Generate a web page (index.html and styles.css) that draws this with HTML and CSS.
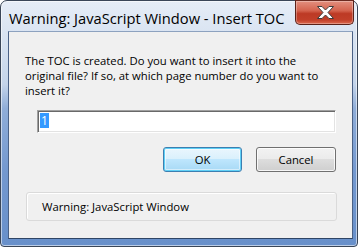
FILE: index.html
```html
<!DOCTYPE html>
<html>
<head>
<meta charset="utf-8">
<link rel="stylesheet" href="styles.css">
</head>
<body>
<div class="window">
  <div class="titlebar">
    <div class="title">Warning: JavaScript Window - Insert TOC</div>
    <div class="close">
      <svg width="17" height="13" viewBox="0 0 17 13"><polygon points="0.5,0.5 5,0.5 8.5,4 12,0.5 16.5,0.5 11,6.5 16.5,12.5 12,12.5 8.5,9 5,12.5 0.5,12.5 6,6.5" fill="#fff" stroke="#3d3d3d" stroke-width="1" stroke-linejoin="round"/></svg>
    </div>
  </div>
  <div class="client">
    <div class="message">
      <div class="line">The TOC is created. Do you want to insert it into the</div>
      <div class="line">original file? If so, at which page number do you want to</div>
      <div class="line">insert it?</div>
    </div>
    <div class="field"><span class="sel">1</span></div>
    <div class="buttons">
      <div class="btn btn-default">OK</div>
      <div class="btn">Cancel</div>
    </div>
    <div class="status">Warning: JavaScript Window</div>
  </div>
</div>
</body>
</html>
```

FILE: styles.css
```css
html, body {
  margin: 0;
  padding: 0;
  background: #ffffff;
}
body {
  width: 362px;
  height: 248px;
  overflow: hidden;
  font-family: "Segoe UI", "Open Sans", "Noto Sans", sans-serif;
}
.window {
  box-sizing: border-box;
  width: 358px;
  height: 247px;
  border: 1px solid #3a4658;
  border-radius: 7px 7px 4px 4px;
  background: linear-gradient(180deg, #e6edf7 0%, #d3dfef 20%, #c4d4ea 34%, #8fadd8 44%, #7398cf 70%, #6890ca 100%);
  box-shadow: inset 0 0 0 1px rgba(255,255,255,0.55);
  padding: 0 4px 7px 7px;
  display: flex;
  flex-direction: column;
}
.titlebar {
  height: 30px;
  display: flex;
  align-items: flex-start;
}
.title {
  flex: 1;
  font-size: 14.7px;
  line-height: 15px;
  padding-top: 10px;
  padding-left: 1px;
  color: #000;
  white-space: nowrap;
}
.close {
  box-sizing: border-box;
  width: 59px;
  height: 25px;
  margin-top: -1px;
  margin-right: -1px;
  border: 1px solid #5a2118;
  border-top-color: #6a2a20;
  border-radius: 0 0 5px 5px;
  background: linear-gradient(180deg, #e3907f 0%, #d4634e 42%, #bd3a25 55%, #c13f29 82%, #dc6a50 100%);
  box-shadow: inset 0 0 0 1px rgba(255,255,255,0.3);
  display: flex;
  align-items: center;
  justify-content: center;
}
.close svg {
  display: block;
  margin-left: 1px;
}
.client {
  flex: 1;
  background: #f0f0f0;
  border: 1px solid #8da2bf;
  border-bottom-color: #2f4565;
  border-left-color: #4a6186;
  border-right-color: #4a6186;
  display: flex;
  flex-direction: column;
  font-size: 11.3px;
  color: #000;
}
.message {
  margin: 21px 0 0 16px;
}
.line {
  height: 15px;
  line-height: 15px;
  white-space: nowrap;
}
.field {
  box-sizing: border-box;
  margin: 12px 16px 0 28px;
  height: 23px;
  background: #fff;
  border: 1px solid;
  border-color: #a0a0a0 #ffffff #ffffff #a0a0a0;
  box-shadow: inset 1px 1px 0 #696969, inset -1px -1px 0 #e3e3e3;
  padding: 2px 0 0 2px;
  line-height: 15px;
}
.sel {
  display: inline-block;
  background: #3399ff;
  color: #fff;
  padding: 0 1px;
  height: 15px;
  font-size: 12px;
}
.buttons {
  margin: 14px 16px 0 0;
  display: flex;
  justify-content: flex-end;
  gap: 14px;
}
.btn {
  box-sizing: border-box;
  width: 80px;
  height: 25px;
  border: 1px solid #707070;
  border-radius: 3px;
  background: linear-gradient(180deg, #f2f2f2 0%, #ebebeb 49%, #dddddd 50%, #cfcfcf 100%);
  box-shadow: inset 0 0 0 1px rgba(255,255,255,0.8);
  display: flex;
  align-items: center;
  justify-content: center;
  line-height: 15px;
}
.btn-default {
  width: 79px;
  border-color: #3c7fb1;
  background: linear-gradient(180deg, #eaf6fd 0%, #d9f0fc 49%, #bee6fd 50%, #a7d9f5 100%);
  box-shadow: inset 0 0 0 1px #5fd0f6, inset 0 0 0 2px rgba(255,255,255,0.5);
}
.status {
  box-sizing: border-box;
  margin: 20px 15px 0 17px;
  height: 29px;
  border: 1px solid #dadada;
  border-radius: 3px;
  box-shadow: inset 1px 1px 0 #ffffff;
  padding: 6px 0 0 15px;
  line-height: 15px;
}
```
